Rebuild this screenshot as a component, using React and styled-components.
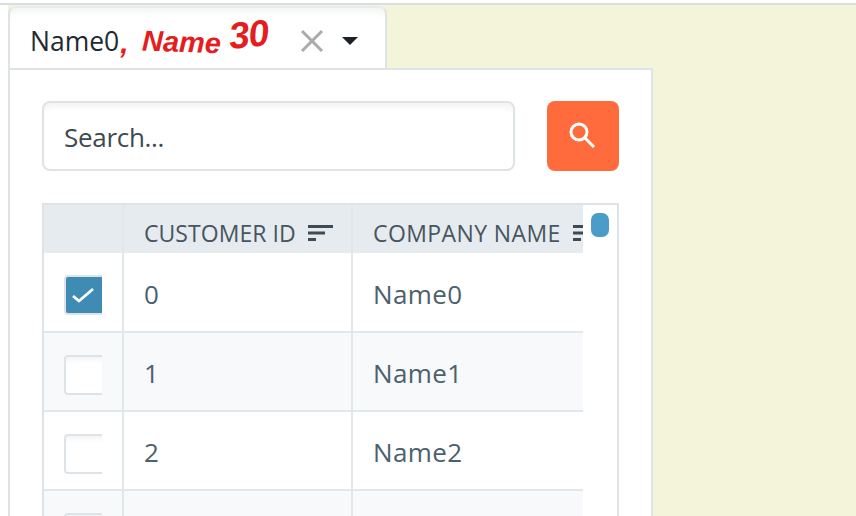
import React from 'react'
import styled, { createGlobalStyle } from 'styled-components'

const GlobalStyle = createGlobalStyle`
  html, body {
    margin: 0;
    height: 100%;
    overflow: hidden;
    background: #fff;
  }
  * { box-sizing: border-box; }
`;

const Page = styled.div`
  height: 516px;
  margin-top: 3px;
  padding-left: 8px;
  border-top: 2px solid #d9dee1;
  font-family: "Open Sans", "Noto Sans", sans-serif;
`;

const Canvas = styled.div`
  height: 100%;
  padding-top: 1px;
  background: #f4f4da;
`;

const Picker = styled.div`
  width: 645px;
`;

const Tab = styled.div`
  display: flex;
  align-items: center;
  width: 379px;
  height: 62px;
  padding: 6px 27px 0 20px;
  background: #fff;
  border: 2px solid #dde3e7;
  border-top-color: #e8ebed;
  border-bottom: 0;
  border-radius: 8px 8px 0 0;
  box-shadow: inset 0 8px 8px -6px rgba(0, 0, 0, 0.07);
`;

const Value = styled.span`
  font-size: 26.5px;
  color: #1f2a33;
`;

const Scrawl = styled.span`
  display: flex;
  flex: 1;
  align-items: baseline;
  font-family: "Liberation Sans", sans-serif;
  font-style: italic;
  font-weight: 700;
  white-space: nowrap;
  color: #e41e20;
`;

const ScrawlComma = styled.span`
  width: 22px;
  margin-left: 1px;
  font-size: 30px;
`;

const ScrawlName = styled.span`
  width: 87px;
  font-size: 29px;
  transform: translateY(-1px) rotate(2deg);
`;

const ScrawlCount = styled.span`
  font-size: 37px;
  letter-spacing: -1px;
  transform: translateY(-6px) rotate(-6deg);
`;

const Clear = styled.svg`
  width: 24px;
  height: 24px;
  margin-right: 18px;
  stroke: #aaaaaa;
  stroke-width: 3;
`;

const Caret = styled.span`
  width: 0;
  height: 0;
  border-left: 8px solid transparent;
  border-right: 8px solid transparent;
  border-top: 8px solid #1c2126;
`;

const Panel = styled.div`
  height: 448px;
  padding: 31px 32px 0;
  background: #fff;
  border: 2px solid #dde3e7;
  border-bottom: 0;
`;

const SearchRow = styled.div`
  display: flex;
  gap: 32px;
  margin-bottom: 32px;
`;

const SearchInput = styled.div`
  display: flex;
  align-items: center;
  flex: 1;
  height: 70px;
  padding: 2px 0 0 20px;
  font-size: 26px;
  letter-spacing: -0.3px;
  color: #3e4a52;
  border: 2px solid #dde3e7;
  border-radius: 8px;
  box-shadow: inset 0 8px 8px -6px rgba(0, 0, 0, 0.07);
`;

const SearchButton = styled.button`
  display: flex;
  align-items: center;
  justify-content: center;
  width: 72px;
  height: 70px;
  padding: 0 2px 2px 0;
  background: #ff6b3d;
  border: none;
  border-radius: 8px;
`;

const GridFrame = styled.div`
  display: flex;
  width: 577px;
  height: 320px;
  border: 2px solid #dde3e7;
  border-bottom: 0;
`;

const GridViewport = styled.div`
  width: 539px;
  overflow: hidden;
`;

const ScrollTrack = styled.div`
  flex: 1;
  padding: 8px 0 0 8px;
`;

const ScrollThumb = styled.div`
  width: 18px;
  height: 24px;
  background: #4a9cc9;
  border-radius: 7px;
`;

const HeaderRow = styled.div`
  display: flex;
  height: 48px;
  background: #e6ebef;
`;

const Row = styled.div`
  display: flex;
  height: 79px;
  background: ${({ $striped }) => ($striped ? '#f7f9fb' : '#fff')};
  border-bottom: 2px solid #e1e8ec;

  &:nth-child(2) {
    height: 80px;
  }
`;

const Cell = styled.div`
  display: flex;
  flex: none;
  align-items: center;
  width: ${({ $width }) => $width}px;
  padding-left: 20px;
  overflow: hidden;
  white-space: nowrap;
  border-right: ${({ $last }) => ($last ? '0' : '2px solid #e1e8ec')};
`;

const HeaderCell = styled(Cell)`
  padding-top: 8px;
  font-size: 23px;
  letter-spacing: ${({ $tracking }) => $tracking ?? 0.05}px;
  color: #47555f;
`;

const BodyCell = styled(Cell)`
  padding-top: 3px;
  font-size: 26px;
  letter-spacing: 0.4px;
  color: #4b616e;
`;

const SortIcon = styled.svg`
  flex: none;
  width: 25px;
  height: 16px;
  margin-left: 12px;
  fill: #3f4a52;
`;

const CheckClip = styled.div`
  width: 38px;
  margin-top: 3px;
  overflow: hidden;
`;

const Checkbox = styled.div`
  display: flex;
  align-items: center;
  justify-content: center;
  width: 42px;
  height: 40px;
  padding-right: 4px;
  background: ${({ $checked }) => ($checked ? '#3f8bb4' : '#fff')};
  border: 2px solid #dde3e7;
  border-radius: 4px;
  box-shadow: ${({ $checked }) =>
    $checked ? 'none' : 'inset 0 6px 6px -4px rgba(0, 0, 0, 0.06)'};
`;

const rows = [
  { id: 0, name: 'Name0', checked: true },
  { id: 1, name: 'Name1' },
  { id: 2, name: 'Name2' },
  { id: '', name: '' },
];

const Sort = () => (
  <SortIcon viewBox="0 0 25 16">
    <rect x="0" y="0" width="25" height="3" />
    <rect x="0" y="6.5" width="17" height="3" />
    <rect x="0" y="13" width="8" height="3" />
  </SortIcon>
);

export default function App() {
  return (
    <>
      <GlobalStyle />
      <Page>
        <Canvas>
          <Picker>
            <Tab>
              <Value>Name0</Value>
              <Scrawl>
                <ScrawlComma>,</ScrawlComma>
                <ScrawlName>Name</ScrawlName>
                <ScrawlCount>30</ScrawlCount>
              </Scrawl>
              <Clear viewBox="0 0 24 24">
                <line x1="2" y1="2" x2="22" y2="22" />
                <line x1="22" y1="2" x2="2" y2="22" />
              </Clear>
              <Caret />
            </Tab>
            <Panel>
              <SearchRow>
                <SearchInput>Search...</SearchInput>
                <SearchButton aria-label="Search">
                  <svg width="26" height="26" viewBox="0 0 26 26" fill="none" stroke="#fff" strokeWidth="3">
                    <circle cx="10" cy="10" r="8" />
                    <line x1="16" y1="16" x2="25" y2="25" />
                  </svg>
                </SearchButton>
              </SearchRow>
              <GridFrame>
                <GridViewport>
                  <HeaderRow>
                    <HeaderCell $width={80} />
                    <HeaderCell $width={229}>
                      CUSTOMER ID
                      <Sort />
                    </HeaderCell>
                    <HeaderCell $width={240} $last $tracking={0.4}>
                      COMPANY NAME
                      <Sort />
                    </HeaderCell>
                  </HeaderRow>
                  {rows.map((row, i) => (
                    <Row key={i} $striped={i % 2 === 1}>
                      <BodyCell $width={80}>
                        <CheckClip>
                          <Checkbox $checked={row.checked}>
                            {row.checked && (
                              <svg width="22" height="16" viewBox="0 0 22 16" fill="none" stroke="#fff" strokeWidth="2.8">
                                <polyline points="1,9 7,14 21,2" />
                              </svg>
                            )}
                          </Checkbox>
                        </CheckClip>
                      </BodyCell>
                      <BodyCell $width={229}>{row.id}</BodyCell>
                      <BodyCell $width={240} $last>{row.name}</BodyCell>
                    </Row>
                  ))}
                </GridViewport>
                <ScrollTrack>
                  <ScrollThumb />
                </ScrollTrack>
              </GridFrame>
            </Panel>
          </Picker>
        </Canvas>
      </Page>
    </>
  )
}
